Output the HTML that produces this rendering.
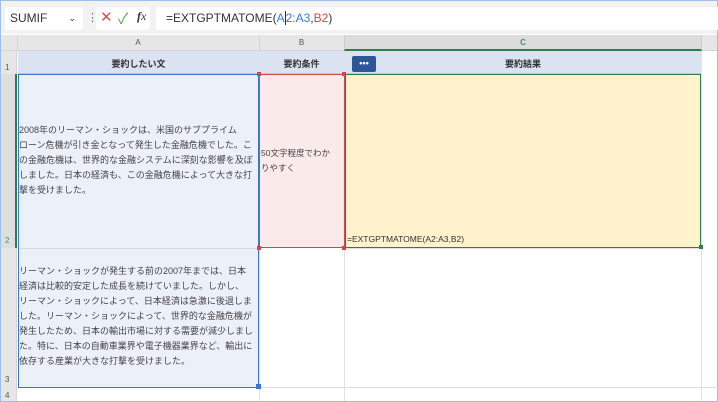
<!DOCTYPE html>
<html><head><meta charset="utf-8"><style>
*{margin:0;padding:0;box-sizing:border-box}
body{width:718px;height:402px;position:relative;overflow:hidden;background:#fff;font-family:"Liberation Sans","Noto Sans CJK JP",sans-serif;color:#333}
.a{position:absolute}
.jp{font-size:9px;letter-spacing:0;line-height:15px;white-space:nowrap;color:#444}
.hd{font-size:9px;font-weight:bold;color:#333;text-align:center}
</style></head><body>
<div class="a" style="left:0;top:0;width:718px;height:402px;border:1px solid #9fbfe0"></div>
<!-- formula bar -->
<div class="a" style="left:1px;top:1px;width:716px;height:33px;background:#f2f2f2"></div>
<div class="a" style="left:5px;top:7px;width:78px;height:23px;background:#fff;border-radius:3px;font-size:12px;line-height:23px;padding-left:5px;color:#333">SUMIF<span style="position:absolute;right:7px;top:0;font-size:9px">⌄</span></div>
<div class="a" style="left:87px;top:11px;font-size:11px;color:#666">⋮</div>
<div class="a" style="left:96px;top:7px;width:54px;height:23px;background:#fff;border-radius:3px"></div>
<div class="a" style="left:100px;top:8px;font-size:15px;color:#e05050">✕</div>
<div class="a" style="left:118px;top:8px;font-size:15px;color:#5aa55a">✓</div>
<div class="a" style="left:137px;top:9px;font-size:12px;font-style:italic;font-family:'Liberation Serif',serif;color:#333"><b>f</b>x</div>
<div class="a" style="left:156px;top:7px;width:562px;height:23px;background:#fff;border-radius:3px 0 0 3px;font-size:12px;line-height:23px;padding-left:10px;color:#333">=EXTGPTMATOME(<span style="color:#3a7bd5">A<span style="border-left:1px solid #333"></span>2:A3</span>,<span style="color:#d04848">B2</span>)</div>
<!-- column headers -->
<div class="a" style="left:1px;top:35px;width:716px;height:16px;background:#e6e6e6;border-bottom:1px solid #d4d4d4"></div>
<div class="a" style="left:17px;top:35px;width:1px;height:16px;background:#d4d4d4"></div>
<div class="a" style="left:259px;top:35px;width:1px;height:16px;background:#d4d4d4"></div>
<div class="a" style="left:344px;top:35px;width:358px;height:16px;background:#dcdcdc;border-bottom:2px solid #2e7d4a;border-left:1px solid #ccc;border-right:1px solid #ccc"></div>
<div class="a" style="left:17px;top:38px;width:242px;text-align:center;font-size:8px;color:#555">A</div>
<div class="a" style="left:259px;top:38px;width:85px;text-align:center;font-size:8px;color:#555">B</div>
<div class="a" style="left:344px;top:38px;width:358px;text-align:center;font-size:8px;color:#4a8a6a;font-weight:bold">C</div>
<!-- row headers -->
<div class="a" style="left:1px;top:51px;width:16px;height:350px;background:#e6e6e6;border-right:1px solid #d4d4d4"></div>
<div class="a" style="left:1px;top:74px;width:16px;height:174px;background:#dedede;border-right:2px solid #2e7d4a"></div>
<div class="a" style="left:5px;top:63px;font-size:8px;color:#555">1</div>
<div class="a" style="left:5px;top:236px;font-size:8px;color:#4a8a6a">2</div>
<div class="a" style="left:5px;top:375px;font-size:8px;color:#555">3</div>
<div class="a" style="left:5px;top:391px;font-size:8px;color:#555">4</div>
<!-- row 1 -->
<div class="a" style="left:18px;top:51px;width:684px;height:23px;background:#dbe2f2;border-bottom:1px solid #c8c8c8"></div>
<div class="a hd" style="left:18px;top:57px;width:241px">要約したい文</div>
<div class="a hd" style="left:259px;top:57px;width:85px">要約条件</div>
<div class="a hd" style="left:344px;top:57px;width:358px">要約結果</div>
<div class="a" style="left:352px;top:56px;width:24px;height:16px;background:#2e5597;border-radius:2px;color:#fff;font-size:9px;text-align:center;line-height:15px;font-weight:bold">•••</div>
<!-- grid lines -->
<div class="a" style="left:18px;top:387px;width:700px;height:1px;background:#ddd"></div>
<div class="a" style="left:259px;top:248px;width:1px;height:153px;background:#e2e2e2"></div>
<div class="a" style="left:344px;top:248px;width:1px;height:153px;background:#e2e2e2"></div>
<div class="a" style="left:701px;top:51px;width:1px;height:350px;background:#e2e2e2"></div>
<div class="a" style="left:344px;top:248px;width:358px;height:1px;background:#e2e2e2"></div>
<!-- A2:A3 -->
<div class="a" style="left:18px;top:74px;width:241px;height:314px;background:#ecf0f9;border:1px solid #3b75d0"></div>
<div class="a" style="left:19px;top:248px;width:239px;height:1px;background:#d4d8e0"></div>
<div class="a" style="left:256px;top:384px;width:5px;height:5px;background:#3b75d0"></div>
<div class="a jp" style="left:19px;top:123px">2008年のリーマン・ショックは、米国のサブプライム<br>ローン危機が引き金となって発生した金融危機でした。こ<br>の金融危機は、世界的な金融システムに深刻な影響を及ぼ<br>しました。日本の経済も、この金融危機によって大きな打<br>撃を受けました。</div>
<div class="a jp" style="left:19px;top:264px">リーマン・ショックが発生する前の2007年までは、日本<br>経済は比較的安定した成長を続けていました。しかし、<br>リーマン・ショックによって、日本経済は急激に後退しま<br>した。リーマン・ショックによって、世界的な金融危機が<br>発生したため、日本の輸出市場に対する需要が減少しまし<br>た。特に、日本の自動車業界や電子機器業界など、輸出に<br>依存する産業が大きな打撃を受けました。</div>
<!-- B2 -->
<div class="a" style="left:259px;top:74px;width:86px;height:174px;background:#fbeaea;border:1.5px solid #d04848"></div>
<div class="a" style="left:257px;top:72px;width:4px;height:4px;background:#d04848"></div>
<div class="a" style="left:342px;top:72px;width:4px;height:4px;background:#d04848"></div>
<div class="a" style="left:257px;top:246px;width:4px;height:4px;background:#d04848"></div>
<div class="a" style="left:342px;top:246px;width:4px;height:4px;background:#d04848"></div>
<div class="a jp" style="left:261px;top:146px;font-size:8.5px">50文字程度でわか<br>りやすく</div>
<!-- C2 -->
<div class="a" style="left:345px;top:74px;width:356px;height:174px;background:#fff2cc;border:1.5px solid #2e7d4a"></div>
<div class="a" style="left:699px;top:245px;width:4px;height:4px;background:#2e7d4a"></div>
<div class="a" style="left:347px;top:234px;font-size:8.5px;color:#333;white-space:nowrap">=EXTGPTMATOME(A2:A3,B2)</div>
</body></html>
